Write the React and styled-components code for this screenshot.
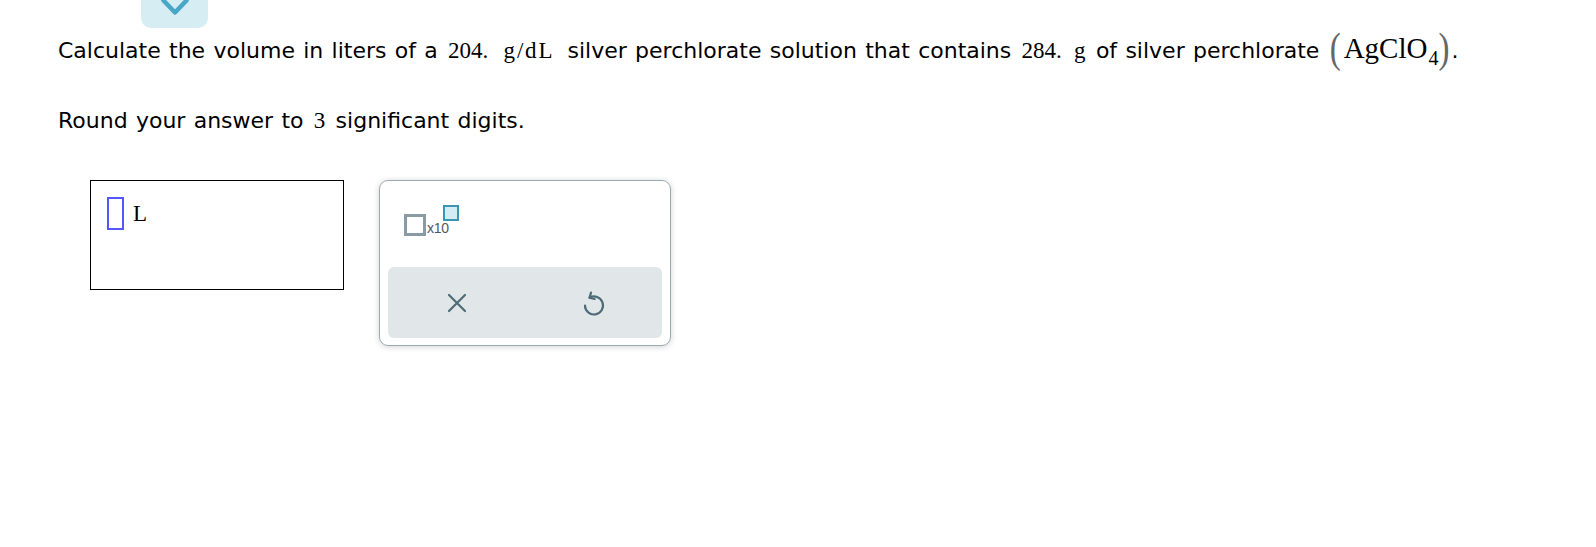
import React from 'react';
import styled, { createGlobalStyle } from 'styled-components';

const GlobalStyle = createGlobalStyle`
  body {
    margin: 0;
    background: #fff;
    font-family: "DejaVu Sans", Verdana, sans-serif;
    color: #000;
  }
`;

const Page = styled.div`
  width: 1596px;
  min-height: 547px;
`;

const Tab = styled.div`
  width: 67px;
  height: 28px;
  margin-left: 141px;
  background: #d5edf3;
  border-radius: 0 0 10px 10px;
  display: flex;
  justify-content: center;
  overflow: hidden;
`;

const Content = styled.div`
  padding: 7px 0 0 58px;
`;

const Para = styled.p`
  margin: 0 0 ${(p) => p.$gap || 0}px;
  font-size: 22px;
  line-height: 32px;
  height: 32px;
  word-spacing: 1.3px;
  white-space: nowrap;
`;

const Math = styled.span`
  font-family: "Liberation Serif", "Times New Roman", serif;
  font-size: 23px;
  margin: 0 ${(p) => p.$side || 2}px;
  letter-spacing: ${(p) => p.$spread || 0}px;
`;

const Formula = styled.span`
  font-family: "Liberation Serif", "Times New Roman", serif;
  font-size: 29px;
  line-height: 16px;
  margin-left: 2px;
`;

const Paren = styled.span`
  display: inline-block;
  font-family: "Liberation Serif", serif;
  font-size: 33px;
  line-height: 16px;
  color: #666;
  transform: scale(1, 1.3);
  transform-origin: 50% 40%;
  margin: 0 ${(p) => (p.$close ? 2 : 1)}px 0 ${(p) => (p.$close ? 0 : 2)}px;
`;

const Sub = styled.span`
  font-family: "Liberation Serif", serif;
  font-size: 20px;
  line-height: 1;
  vertical-align: -7px;
  margin-left: 1px;
`;

const AnswerRow = styled.div`
  display: flex;
  align-items: flex-start;
  gap: 35px;
  margin-left: 32px;
`;

const AnswerBox = styled.div`
  box-sizing: border-box;
  width: 254px;
  height: 110px;
  border: 1px solid #000;
  padding: 16px;
  display: flex;
  align-items: flex-start;
`;

const Slot = styled.span`
  box-sizing: border-box;
  width: 17px;
  height: 33px;
  border: 2px solid #5656ff;
`;

const Unit = styled.span`
  font-family: "Liberation Serif", serif;
  font-size: 23px;
  line-height: 1;
  margin: 5px 0 0 9px;
`;

const Panel = styled.div`
  box-sizing: border-box;
  width: 292px;
  height: 166px;
  border: 1px solid #9aabb2;
  border-radius: 9px;
  box-shadow: 0 1px 6px rgba(0, 0, 0, 0.18);
  padding: 0 8px 7px 8px;
  display: flex;
  flex-direction: column;
`;

const Tools = styled.div`
  height: 86px;
  box-sizing: border-box;
  padding: 24px 0 0 16px;
`;

const SciButton = styled.div`
  display: inline-flex;
  align-items: flex-end;
  height: 31px;
`;

const BaseBox = styled.span`
  box-sizing: border-box;
  width: 22px;
  height: 22px;
  border: 3px solid #8a9ba3;
`;

const Times = styled.span`
  font-family: "Liberation Sans", Arial, sans-serif;
  font-size: 14px;
  line-height: 1;
  color: #4b5a60;
  margin: 0 0 1px 1px;
  letter-spacing: -0.3px;
`;

const SupBox = styled.span`
  box-sizing: border-box;
  align-self: flex-start;
  width: 16px;
  height: 16px;
  border: 2.5px solid #3a96b3;
  background: #d4edf4;
  margin-left: -6px;
`;

const ActionBar = styled.div`
  flex: 1;
  display: flex;
  background: #e1e6e9;
  border-radius: 6px;
`;

const ActionButton = styled.button`
  flex: 1;
  border: none;
  background: transparent;
  display: flex;
  align-items: center;
  justify-content: center;
  padding: 0;
  color: #4e6b77;
  cursor: pointer;
`;

const Chevron = () => (
  <svg width="28" height="20" viewBox="0 0 28 20">
    <polyline points="2.5,0.5 14,12.5 25.5,0.5" fill="none" stroke="#48a7c7" strokeWidth="4.5" strokeLinecap="round" strokeLinejoin="round" />
  </svg>
);

const CloseIcon = () => (
  <svg width="20" height="20" viewBox="0 0 20 20">
    <path d="M2 2 L18 18 M18 2 L2 18" stroke="currentColor" strokeWidth="2.2" strokeLinecap="round" />
  </svg>
);

const UndoIcon = () => (
  <svg width="24" height="28" viewBox="0 0 24 28">
    <path
      d="M3 16.5 A9 9 0 1 0 7.5 8.7"
      fill="none"
      stroke="currentColor"
      strokeWidth="2.2"
      strokeLinecap="round"
    />
    <path
      d="M9 3.6 L7.5 8.7 L12.6 10"
      fill="none"
      stroke="currentColor"
      strokeWidth="2.2"
      strokeLinecap="round"
      strokeLinejoin="round"
    />
  </svg>
);

export default function App() {
  return (
    <Page>
      <GlobalStyle />
      <Tab>
        <Chevron />
      </Tab>
      <Content>
        <Para $gap={38}>
          Calculate the volume in liters of a <Math>204.</Math> <Math $side={5} $spread={1.8}>g/dL</Math> silver
          perchlorate solution that contains <Math>284.</Math> <Math>g</Math> of silver perchlorate{' '}
          <Paren>(</Paren>
          <Formula>AgClO</Formula>
          <Sub>4</Sub>
          <Paren $close>)</Paren>.
        </Para>
        <Para $gap={43}>
          Round your answer to <Math>3</Math> significant digits.
        </Para>
        <AnswerRow>
          <AnswerBox>
            <Slot />
            <Unit>L</Unit>
          </AnswerBox>
          <Panel>
            <Tools>
              <SciButton>
                <BaseBox />
                <Times>x10</Times>
                <SupBox />
              </SciButton>
            </Tools>
            <ActionBar>
              <ActionButton aria-label="clear">
                <CloseIcon />
              </ActionButton>
              <ActionButton aria-label="undo">
                <UndoIcon />
              </ActionButton>
            </ActionBar>
          </Panel>
        </AnswerRow>
      </Content>
    </Page>
  );
}
